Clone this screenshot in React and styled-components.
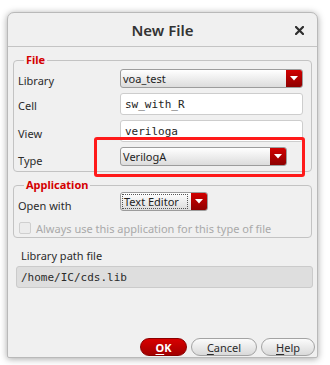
import React from "react";
import styled, { createGlobalStyle } from "styled-components";

const Global = createGlobalStyle`
  html, body { margin: 0; padding: 0; background: #ffffff; }
  body { font-family: "Noto Sans", "Open Sans", sans-serif; color: #2b2b2b; }
  * { box-sizing: border-box; }
`;

const Page = styled.div`
  width: 330px;
  height: 365px;
  padding: 12px 0 0 7px;
`;

const Dialog = styled.div`
  position: relative;
  width: 311px;
  height: 346px;
  background: #f0f0f0;
  border: 1px solid #b9b9b9;
  border-radius: 7px 7px 2px 2px;
  box-shadow: 0 1px 7px rgba(0, 0, 0, 0.35);
  display: flex;
  flex-direction: column;
`;

const TitleBar = styled.div`
  height: 34px;
  flex: none;
  border-bottom: 1px solid #c4c4c4;
  display: flex;
  align-items: center;
  justify-content: center;
  position: relative;
`;

const Title = styled.div`
  font-size: 15px;
  font-weight: 600;
  color: #333;
  padding-top: 1px;
`;

const CloseBtn = styled.div`
  position: absolute;
  right: 13px;
  top: 13px;
  width: 9px;
  height: 9px;
  display: flex;
`;

const Body = styled.div`
  flex: 1;
  display: flex;
  flex-direction: column;
  padding: 6px 2px 0 5px;
`;

const Group = styled.fieldset`
  margin: ${(p) => p.$mt || 0}px 3px 0 0;
  padding: ${(p) => p.$pt || 0}px 8px ${(p) => p.$pb || 0}px 4px;
  border: 1px solid #c3c3c3;
  border-radius: 4px;
  min-width: 0;
`;

const Legend = styled.legend`
  margin-left: 6px;
  padding: 0 2px;
  font-size: 11px;
  line-height: 14px;
  font-weight: 700;
  color: #d40000;
`;

const FormGrid = styled.div`
  display: grid;
  grid-template-columns: 102px 1fr;
  row-gap: 5px;
  align-items: center;
`;

const Label = styled.div`
  font-size: 11px;
  line-height: 15px;
  color: #2b2b2b;
  margin: ${(p) => p.$dy || 0}px 0 ${(p) => -(p.$dy || 0)}px;
`;

const Combo = styled.div`
  height: 19px;
  width: ${(p) => (p.$w ? `${p.$w}px` : "100%")};
  display: flex;
  border: 1px solid #9c9c9c;
  border-radius: 3px;
  background: linear-gradient(#ffffff, #dcdcdc);
  overflow: hidden;
`;

const ComboText = styled.div`
  flex: 1;
  display: flex;
  align-items: center;
  padding-left: 2px;
  font-size: 11px;
  color: #1e1e1e;
  white-space: nowrap;
`;

const FocusText = styled.span`
  border: 1px dotted #555;
  padding: 0 1px;
  line-height: 13px;
  margin-left: -1px;
  width: 100%;
  margin-right: 3px;
`;

const ComboArrow = styled.div`
  width: 16px;
  flex: none;
  background: linear-gradient(#d10000, #8e0000);
  display: flex;
  align-items: center;
  justify-content: center;
`;

const TextInput = styled.div`
  height: 22px;
  background: #ffffff;
  border: 1px solid #cdcdcd;
  border-radius: 3px;
  display: flex;
  align-items: center;
  padding-left: 4px;
  font-family: "DejaVu Sans Mono", monospace;
  font-size: 11px;
  color: #1e1e1e;
`;

const CheckRow = styled.div`
  display: flex;
  align-items: center;
  gap: 5px;
  margin: 11px 0 0 1px;
  height: 12px;
`;

const CheckBox = styled.div`
  width: 12px;
  height: 12px;
  flex: none;
  border: 1px solid #cfcfcf;
  border-radius: 2px;
  background: #ececec;
`;

const DimText = styled.div`
  font-size: 11px;
  color: #a9a9a9;
  white-space: nowrap;
`;

const PathLabel = styled.div`
  font-size: 11px;
  margin: 10px 0 0 8px;
  line-height: 15px;
`;

const PathBox = styled.div`
  margin: 3px 2px 0 3px;
  height: 22px;
  background: #dedede;
  border: 1px solid #cbcbcb;
  border-radius: 3px;
  display: flex;
  align-items: center;
  padding-left: 4px;
  font-family: "DejaVu Sans Mono", monospace;
  font-size: 11px;
  color: #2b2b2b;
`;

const ButtonRow = styled.div`
  margin-top: auto;
  margin-bottom: 1px;
  display: flex;
  justify-content: flex-end;
  gap: 4px;
`;

const Button = styled.div`
  width: ${(p) => p.$w}px;
  height: 18px;
  border-radius: 9px;
  display: flex;
  align-items: center;
  justify-content: center;
  font-size: 11px;
  border: 1px solid ${(p) => (p.$primary ? "#8a0000" : "#a3a3a3")};
  background: ${(p) =>
    p.$primary
      ? "linear-gradient(#d80000, #a20000)"
      : "linear-gradient(#fbfbfb, #d9d9d9)"};
  color: ${(p) => (p.$primary ? "#ffffff" : "#2b2b2b")};
  font-weight: ${(p) => (p.$primary ? 700 : 400)};
  u { text-decoration-thickness: 1px; text-underline-offset: 2px; }
`;

const Highlight = styled.div`
  position: absolute;
  left: 86px;
  top: 124px;
  width: 211px;
  height: 40px;
  border: 3px solid #ff1a1a;
  border-radius: 3px;
  pointer-events: none;
`;

const Arrow = () => (
  <svg width="8" height="5" viewBox="0 0 8 5">
    <polygon points="0,0 8,0 4,4.5" fill="#ffffff" />
  </svg>
);

const Row = ({ label, dy, children }) => (
  <>
    <Label $dy={dy}>{label}</Label>
    <div>{children}</div>
  </>
);

export default function App() {
  return (
    <Page>
      <Global />
      <Dialog>
        <TitleBar>
          <Title>New File</Title>
          <CloseBtn>
            <svg width="9" height="9" viewBox="0 0 9 9">
              <path d="M1 1 L8 8 M8 1 L1 8" stroke="#2e2e2e" strokeWidth="2.2" strokeLinecap="square" />
            </svg>
          </CloseBtn>
        </TitleBar>
        <Body>
          <Group $pt={2} $pb={5}>
            <Legend>File</Legend>
            <FormGrid>
              <Row label="Library" dy={2}>
                <Combo>
                  <ComboText>voa_test</ComboText>
                  <ComboArrow><Arrow /></ComboArrow>
                </Combo>
              </Row>
              <Row label="Cell" dy={1}>
                <TextInput>sw_with_R</TextInput>
              </Row>
              <Row label="View" dy={2}>
                <TextInput>veriloga</TextInput>
              </Row>
              <Row label="Type" dy={4}>
                <Combo $w={167}>
                  <ComboText>VerilogA</ComboText>
                  <ComboArrow><Arrow /></ComboArrow>
                </Combo>
              </Row>
            </FormGrid>
          </Group>
          <Group $mt={6} $pt={0} $pb={3}>
            <Legend>Application</Legend>
            <FormGrid>
              <Row label="Open with" dy={4}>
                <Combo $w={88}>
                  <ComboText><FocusText>Text Editor</FocusText></ComboText>
                  <ComboArrow><Arrow /></ComboArrow>
                </Combo>
              </Row>
            </FormGrid>
            <CheckRow>
              <CheckBox />
              <DimText>Always use this application for this type of file</DimText>
            </CheckRow>
          </Group>
          <PathLabel>Library path file</PathLabel>
          <PathBox>/home/IC/cds.lib</PathBox>
          <ButtonRow>
            <Button $primary $w={47}><span><u>O</u>K</span></Button>
            <Button $w={66}><span><u>C</u>ancel</span></Button>
            <Button $w={54}><span><u>H</u>elp</span></Button>
          </ButtonRow>
        </Body>
        <Highlight />
      </Dialog>
    </Page>
  );
}
